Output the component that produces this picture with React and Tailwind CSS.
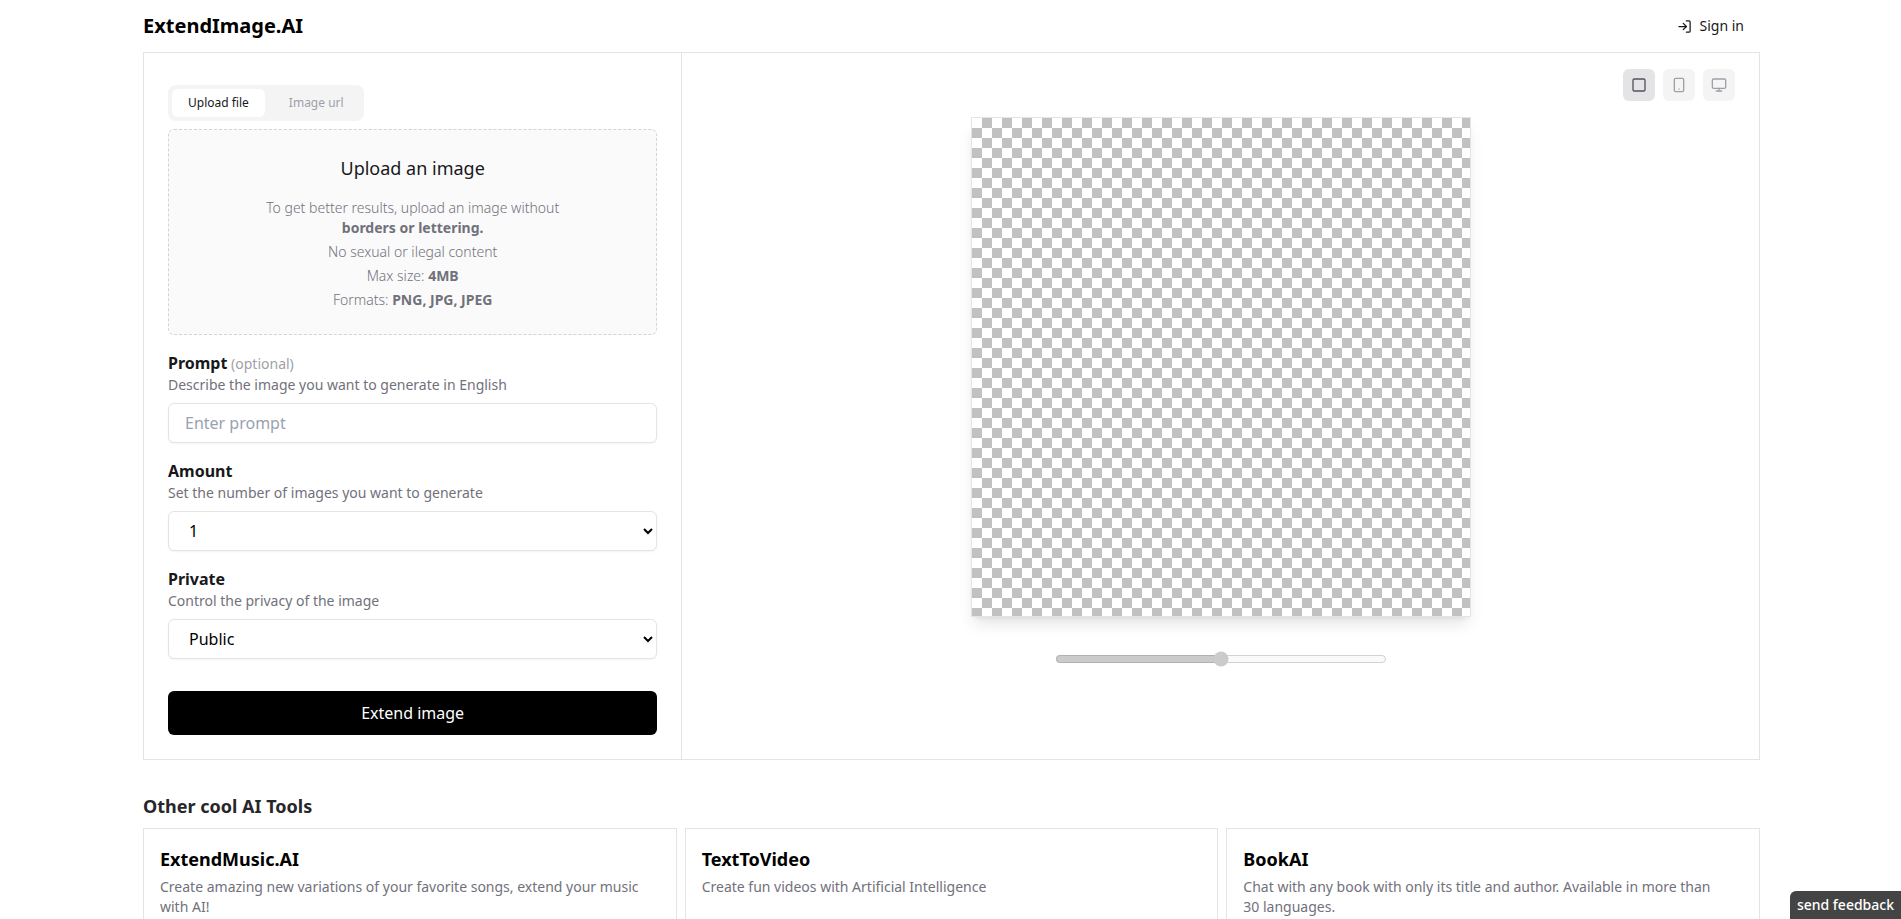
import React, { useState } from "react";
import { LogIn, Monitor, Smartphone, Square } from "lucide-react";

const TOOLS = [
  {
    name: "ExtendMusic.AI",
    description:
      "Create amazing new variations of your favorite songs, extend your music with AI!",
  },
  {
    name: "TextToVideo",
    description: "Create fun videos with Artificial Intelligence",
  },
  {
    name: "BookAI",
    description:
      "Chat with any book with only its title and author. Available in more than 30 languages.",
  },
];

const RATIOS = [
  { id: "square", label: "Square", Icon: Square },
  { id: "portrait", label: "Portrait", Icon: Smartphone },
  { id: "landscape", label: "Landscape", Icon: Monitor },
];

function Header() {
  return (
    <header className="flex h-[52px] items-center justify-between">
      <a href="#" className="text-xl font-bold text-black">
        ExtendImage.AI
      </a>
      <button className="flex items-center gap-2 px-4 text-sm text-zinc-900">
        <LogIn size={15} />
        Sign in
      </button>
    </header>
  );
}

function SourceTabs({ tab, setTab }) {
  const base = "h-7 rounded-md px-4 text-[12px]";
  return (
    <div className="flex w-fit gap-2 rounded-lg bg-zinc-100 p-1">
      <button
        className={`${base} ${tab === "file" ? "bg-white text-zinc-900" : "text-zinc-400"}`}
        onClick={() => setTab("file")}
      >
        Upload file
      </button>
      <button
        className={`${base} ${tab === "url" ? "bg-white text-zinc-900" : "text-zinc-400"}`}
        onClick={() => setTab("url")}
      >
        Image url
      </button>
    </div>
  );
}

function Field({ id, label, hint, description, children }) {
  return (
    <div className="mt-4">
      <label htmlFor={id} className="block leading-6 font-bold text-zinc-900">
        {label}
        {hint && <span className="text-sm font-normal text-zinc-400"> {hint}</span>}
      </label>
      <p className="mb-2 text-sm text-zinc-500">{description}</p>
      {children}
    </div>
  );
}

function Form() {
  const [tab, setTab] = useState("file");
  const [prompt, setPrompt] = useState("");
  const control =
    "h-10 w-full rounded-md border border-zinc-200 bg-white shadow-xs";

  return (
    <div className="border-r border-zinc-200 px-6 pt-8 pb-6">
      <SourceTabs tab={tab} setTab={setTab} />

      {/* Drop zone */}
      <button className="mt-2 flex w-full flex-col items-center rounded-md border border-dashed border-zinc-300 bg-zinc-50 px-20 py-6 text-sm font-light text-zinc-500">
        <span className="mb-4 text-lg font-normal text-zinc-900">Upload an image</span>
        <span>
          To get better results, upload an image without{" "}
          <strong className="block font-bold">borders or lettering.</strong>
        </span>
        <span className="mt-1">No sexual or ilegal content</span>
        <span className="mt-1">
          Max size: <strong className="font-bold">4MB</strong>
        </span>
        <span className="mt-1">
          Formats: <strong className="font-bold">PNG, JPG, JPEG</strong>
        </span>
      </button>

      <Field
        id="prompt"
        label="Prompt"
        hint="(optional)"
        description="Describe the image you want to generate in English"
      >
        <input
          id="prompt"
          type="text"
          className={`${control} px-4 placeholder:text-gray-400`}
          placeholder="Enter prompt"
          value={prompt}
          onChange={(e) => setPrompt(e.target.value)}
        />
      </Field>

      <Field
        id="amount"
        label="Amount"
        description="Set the number of images you want to generate"
      >
        <select id="amount" className={`${control} pl-4`}>
          <option>1</option>
          <option>2</option>
          <option>3</option>
          <option>4</option>
        </select>
      </Field>

      <Field id="private" label="Private" description="Control the privacy of the image">
        <select id="private" className={`${control} pl-4`}>
          <option>Public</option>
          <option>Private</option>
        </select>
      </Field>

      <button className="mt-8 h-11 w-full rounded-md bg-black text-white">
        Extend image
      </button>
    </div>
  );
}

function Preview() {
  const [ratio, setRatio] = useState("square");

  return (
    <div className="col-span-2 flex flex-col px-6 py-4">
      <div className="flex justify-end gap-2">
        {RATIOS.map(({ id, label, Icon }) => (
          <button
            key={id}
            aria-label={label}
            className={`flex size-8 items-center justify-center rounded-md ${
              ratio === id ? "bg-zinc-200 text-zinc-600" : "bg-zinc-100 text-zinc-400"
            }`}
            onClick={() => setRatio(id)}
          >
            <Icon size={16} strokeWidth={2} />
          </button>
        ))}
      </div>

      {/* Transparent canvas */}
      <div className="mx-auto mt-4 aspect-square w-full max-w-[500px] border border-zinc-200 bg-[repeating-conic-gradient(#c1c1c1_0_25%,#fff_0_50%)] bg-size-[20px_20px] shadow-lg" />

      <input
        type="range"
        aria-label="Image size"
        className="mx-auto mt-[34px] w-[332px]"
        defaultValue={50}
        disabled
      />
    </div>
  );
}

export default function App() {
  return (
    <div className="h-screen overflow-hidden bg-white pr-[141px] pl-[143px] font-['Segoe_UI','Noto_Sans',sans-serif]">
      <Header />

      <main className="grid grid-cols-3 border border-zinc-200">
        <Form />
        <Preview />
      </main>

      {/* Other tools */}
      <section className="mt-8">
        <h2 className="mb-2 text-lg font-bold text-zinc-800">Other cool AI Tools</h2>
        <div className="grid grid-cols-3 gap-2">
          {TOOLS.map((tool) => (
            <a key={tool.name} href="#" className="border border-zinc-200 p-4">
              <h3 className="mb-1 text-lg font-bold text-black">{tool.name}</h3>
              <p className="pr-4 text-sm text-zinc-500">{tool.description}</p>
            </a>
          ))}
        </div>
      </section>

      <button className="fixed right-0 bottom-0 h-7 rounded-tl-md bg-[#444] px-[7px] text-sm font-medium text-white">
        send feedback
      </button>
    </div>
  );
}
